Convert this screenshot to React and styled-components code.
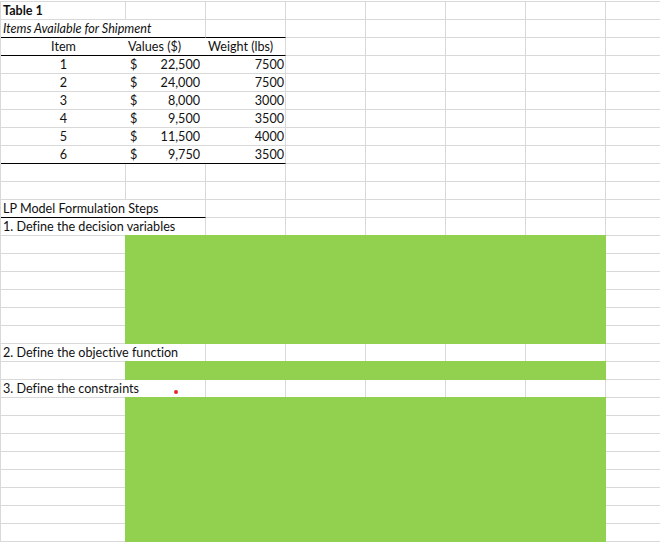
import React from "react";
import styled, { createGlobalStyle } from "styled-components";

const GRID = "#d9d9d9";

const items = [
  [1, "22,500", 7500],
  [2, "24,000", 7500],
  [3, "8,000", 3000],
  [4, "9,500", 3500],
  [5, "11,500", 4000],
  [6, "9,750", 3500],
];

const GlobalStyle = createGlobalStyle`
  html, body {
    margin: 0;
    background: #fff;
  }
  body {
    overflow: hidden;
    font-family: Lato, "Noto Sans", sans-serif;
    font-variant-ligatures: none;
  }
`;

const Sheet = styled.div`
  display: grid;
  grid-template-columns: 125px repeat(7, 80px);
  grid-auto-rows: 18px;
  width: max-content;
  margin-top: 1px;
  border-top: 1px solid ${GRID};
  border-left: 1px solid ${GRID};
  font-size: 12.6px;
  color: #111;
`;

const Cell = styled.div`
  grid-column: span ${(p) => p.$span || 1};
  min-width: 0;
  box-sizing: border-box;
  padding: 0 ${(p) => p.$padRight ?? 2}px 0 ${(p) => p.$padLeft ?? 2}px;
  border-right: ${(p) => (p.$open ? "none" : `1px solid ${GRID}`)};
  border-bottom: 1px solid ${(p) => (p.$rule ? "#000" : GRID)};
  background: #fff;
  line-height: 17px;
  white-space: nowrap;
  text-align: ${(p) => p.$align || "left"};
  font-weight: ${(p) => (p.$bold ? 700 : 400)};
  font-style: ${(p) => (p.$italic ? "italic" : "normal")};
`;

const NoteCell = styled(Cell)`
  position: relative;
`;

const Marker = styled.span`
  position: absolute;
  left: 173px;
  top: 10px;
  width: 4px;
  height: 4px;
  border-radius: 50%;
  background: #e3262b;
`;

const Amount = styled.div`
  display: flex;
  justify-content: space-between;
`;

const Fill = styled.div`
  position: relative;
  z-index: 1;
  grid-column: span 6;
  grid-row: span ${(p) => p.$rows};
  margin: -1px 0 0 -1px;
  background: #92d050;
`;

const blanks = (n, key) =>
  Array.from({ length: n }, (_, i) => <Cell key={`${key}-${i}`} />);

const GreenBlock = ({ rows, id }) => (
  <>
    <Cell />
    <Fill $rows={rows} />
    <Cell />
    {Array.from({ length: rows - 1 }, (_, i) => (
      <React.Fragment key={`${id}-${i}`}>
        <Cell />
        <Cell />
      </React.Fragment>
    ))}
  </>
);

export default function App() {
  return (
    <>
      <GlobalStyle />
      <Sheet>
        <Cell $bold>Table 1</Cell>
        {blanks(7, "r0")}

        <Cell $span={2} $italic $rule>
          Items Available for Shipment
        </Cell>
        <Cell $rule />
        {blanks(5, "r1")}

        <Cell $align="center" $open $rule>
          Item
        </Cell>
        <Cell $open $rule>
          Values ($)
        </Cell>
        <Cell $rule>Weight (lbs)</Cell>
        {blanks(5, "r2")}

        {items.map(([item, value, weight], i) => {
          const last = i === items.length - 1;
          return (
            <React.Fragment key={item}>
              <Cell $align="center" $open $rule={last}>
                {item}
              </Cell>
              <Cell $open $rule={last} $padLeft={4} $padRight={6}>
                <Amount>
                  <span>$</span>
                  <span>{value}</span>
                </Amount>
              </Cell>
              <Cell $align="right" $padRight={1} $rule={last}>
                {weight}
              </Cell>
              {blanks(5, `item-${item}`)}
            </React.Fragment>
          );
        })}

        {blanks(16, "gap")}

        <Cell $span={2} $rule>
          LP Model Formulation Steps
        </Cell>
        {blanks(6, "r11")}

        <Cell $span={2}>1. Define the decision variables</Cell>
        {blanks(6, "r12")}

        <GreenBlock rows={6} id="vars" />

        <Cell $span={2}>2. Define the objective function</Cell>
        {blanks(6, "r19")}

        <GreenBlock rows={1} id="obj" />

        <NoteCell $span={2}>
          3. Define the constraints
          <Marker />
        </NoteCell>
        {blanks(6, "r21")}

        <GreenBlock rows={8} id="cons" />
      </Sheet>
    </>
  );
}
